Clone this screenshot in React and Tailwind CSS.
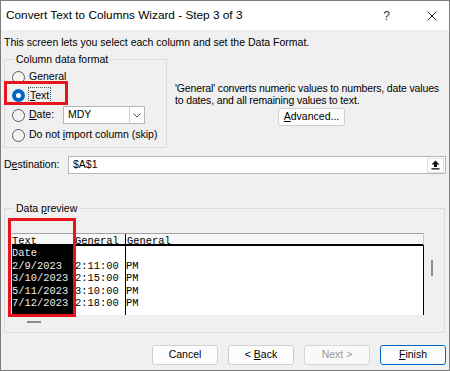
const Radio = ({ checked }) =>
  checked ? (
    <span className="w-[13px] h-[13px] rounded-full bg-[#0067c0] flex items-center justify-center shrink-0">
      <span className="w-[5px] h-[5px] rounded-full bg-white" />
    </span>
  ) : (
    <span className="w-[13px] h-[13px] rounded-full border border-[#5c5c5c] bg-[#f3f3f3] shrink-0" />
  );

const Btn = ({ children, primary, disabled }) => (
  <button
    className={
      primary
        ? "w-[66px] h-[20px] rounded-[3px] border-[1.5px] border-[#0067c0] bg-[#fdfdfd] text-black"
        : disabled
          ? "w-[66px] h-[20px] rounded-[3px] border border-[#d6d6d6] bg-[#f9f9f9] text-[#9a9a9a]"
          : "w-[66px] h-[20px] rounded-[3px] border border-[#d0d0d0] bg-[#fdfdfd] text-black"
    }
  >
    {children}
  </button>
);

const rows = [
  ["Date", "", ""],
  ["2/9/2023", "2:11:00", "PM"],
  ["3/10/2023", "2:15:00", "PM"],
  ["5/11/2023", "3:10:00", "PM"],
  ["7/12/2023", "2:18:00", "PM"],
];

export default function App() {
  return (
    <div className="w-[450px] h-[371px] bg-[#f0f0f0] border border-[#7d7d7d] flex flex-col font-['Liberation_Sans',sans-serif] text-[10.5px] text-black overflow-hidden">
      {/* title bar */}
      <div className="h-[29px] bg-white flex items-center pl-[5px] shrink-0 text-[11.8px]">
        <span>Convert Text to Columns Wizard - Step 3 of 3</span>
        <span className="ml-auto text-[12px] text-[#333]">?</span>
        <svg width="10" height="10" viewBox="0 0 10 10" className="ml-[37px] mr-[12px]">
          <path d="M0.5 0.5 L9.5 9.5 M9.5 0.5 L0.5 9.5" stroke="#222" strokeWidth="1" />
        </svg>
      </div>

      <div className="px-[3px] flex flex-col">
        <div className="mt-[5px] leading-[14px]">
          This screen lets you select each column and set the Data Format.
        </div>

        <div className="flex items-start mt-[3px]">
          <fieldset className="w-[163px] h-[96px] border border-[#dcdcdc] px-[7px] pt-[2px] shrink-0">
            <legend className="ml-[2px] px-[2px] leading-[14px]">Column data format</legend>
            <div className="flex items-center h-[18px] gap-[4px]">
              <Radio />
              <span>General</span>
            </div>
            <div className="flex items-center h-[18px] gap-[3px] relative">
              <Radio checked />
              <span className="border border-dotted border-[#555] px-[1px] leading-[14px]">
                <u>T</u>ext
              </span>
              <div className="absolute left-[-8px] top-[-5px] w-[64px] h-[24px] border-[3px] border-[#e8141c] pointer-events-none" />
            </div>
            <div className="flex items-center h-[22px] gap-[4px]">
              <Radio />
              <span className="w-[30px]">
                <u>D</u>ate:
              </span>
              <div className="w-[82px] h-[18px] bg-white border border-[#b5b5b5] flex items-center">
                <span className="pl-[4px] flex-1">MDY</span>
                <span className="w-[15px] h-full border-l border-[#d0d0d0] flex items-center justify-center">
                  <svg width="8" height="5" viewBox="0 0 8 5">
                    <path d="M0.5 0.5 L4 4 L7.5 0.5" fill="none" stroke="#555" strokeWidth="1" />
                  </svg>
                </span>
              </div>
            </div>
            <div className="flex items-center h-[18px] gap-[4px]">
              <Radio />
              <span>
                Do not <u>i</u>mport column (skip)
              </span>
            </div>
          </fieldset>

          <div className="ml-[8px] flex-1 flex flex-col pt-[30px]">
            <div className="leading-[12px] whitespace-nowrap tracking-[-0.15px]">
              'General' converts numeric values to numbers, date values
              <br />
              to dates, and all remaining values to text.
            </div>
            <button className="self-center ml-[2px] mt-[2px] w-[67px] h-[18px] rounded-[3px] border border-[#d0d0d0] bg-[#fdfdfd]">
              <u>A</u>dvanced...
            </button>
          </div>
        </div>

        <div className="flex items-center h-[18px] mt-[8px]">
          <span className="w-[64px]">
            D<u>e</u>stination:
          </span>
          <div className="flex-1 h-[18px] bg-white border border-[#b5b5b5] flex items-center">
            <span className="pl-[4px] flex-1">$A$1</span>
            <span className="w-[17px] h-[15px] mr-[1px] border border-[#e0e0e0] flex items-center justify-center">
              <svg width="9" height="10" viewBox="0 0 9 10">
                <path d="M4.5 0.5 L8.5 4.5 L6 4.5 L6 7 L3 7 L3 4.5 L0.5 4.5 Z" fill="#111" />
                <rect x="0.5" y="8.2" width="8" height="1.3" fill="#111" />
              </svg>
            </span>
          </div>
        </div>

        <fieldset className="w-[441px] h-[132px] mt-[27px] border border-[#dcdcdc] px-[7px]">
          <legend className="ml-[2px] px-[2px] leading-[14px]">
            Data <u>p</u>review
          </legend>
          <div className="flex pt-[18px]">
            <div className="flex flex-col">
              <div className="relative w-[412px] h-[82px] flex flex-col font-['Liberation_Mono',monospace] text-[10.4px]">
                <div className="h-[13px] flex border-t border-[#a0a0a0] border-r border-r-[#c8c8c8] bg-[#f7f7f7] border-b-2 border-b-black">
                  <div className="w-[62px] leading-[12px] pt-[1px]">Text</div>
                  <div className="w-[51px] pl-[1px] leading-[12px] pt-[1px]">General</div>
                  <div className="flex-1 border-l border-black pl-[1px] leading-[12px] pt-[1px]">General</div>
                </div>
                <div className="flex-1 flex border-r border-black">
                  <div className="w-[62px] bg-black text-[#ececec] pt-[1px]">
                    {rows.map((r, i) => (
                      <div key={i} className="h-[12.5px] leading-[12.5px]">{r[0]}</div>
                    ))}
                  </div>
                  <div className="w-[51px] bg-white pl-[1px] pt-[1px]">
                    {rows.map((r, i) => (
                      <div key={i} className="h-[12.5px] leading-[12.5px]">{r[1]}</div>
                    ))}
                  </div>
                  <div className="flex-1 bg-white border-l border-black pt-[1px]">
                    {rows.map((r, i) => (
                      <div key={i} className="h-[12.5px] leading-[12.5px]">{r[2]}</div>
                    ))}
                  </div>
                </div>
                <div className="absolute left-[-4px] top-[-15px] w-[68px] h-[99px] border-[3px] border-[#e8141c] pointer-events-none" />
              </div>
              <div className="mt-[6px] ml-[15px] w-[14px] h-[2px] bg-[#8a8a8a]" />
            </div>
            <div className="ml-[7px] mt-[27px] w-[2px] h-[16px] bg-[#8a8a8a]" />
          </div>
        </fieldset>

        <div className="flex justify-end gap-[10px] mt-[12px]">
          <Btn>Cancel</Btn>
          <Btn>
            &lt; <u>B</u>ack
          </Btn>
          <Btn disabled>Next &gt;</Btn>
          <Btn primary>
            <u>F</u>inish
          </Btn>
        </div>
      </div>
    </div>
  );
}
